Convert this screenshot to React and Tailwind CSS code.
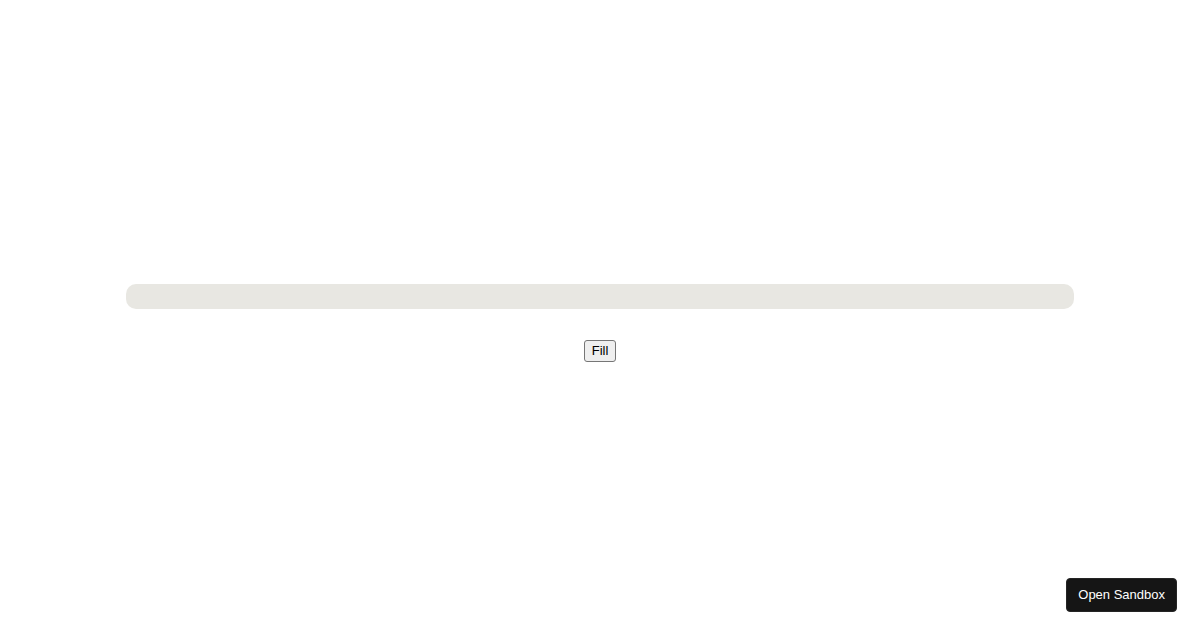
import { useState } from "react";

const ProgressBar = ({ percent }) => {
  return (
    <div
      role="progressbar"
      aria-label="Progress"
      aria-valuemin={0}
      aria-valuemax={100}
      aria-valuenow={percent}
      className="w-4/5 h-[25px] rounded-[10px] bg-[#e8e7e2] overflow-hidden"
    >
      <div
        className="h-full rounded-[10px] bg-green-600 transition-all duration-1000"
        style={{ width: `${percent}%` }}
      />
    </div>
  );
};

const App = () => {
  const [percent, setPercent] = useState(0);

  return (
    <div className="min-h-screen bg-white px-2 pt-4 flex flex-col items-center justify-center gap-[31px] font-['Liberation_Sans',Arial,sans-serif] text-[13px]">
      <ProgressBar percent={percent} />

      <button
        type="button"
        onClick={() => setPercent(100)}
        className="h-[22px] px-[7px] border border-[#767676] rounded-[3px] bg-[#efefef] text-black leading-[18px]"
      >
        Fill
      </button>

      {/* link that stays in the corner of the preview */}
      <a
        href="#sandbox"
        className="fixed right-[23px] bottom-[18px] h-[34px] px-[11px] flex items-center rounded-[4px] border border-[#252525] bg-[#151515] text-white"
      >
        Open Sandbox
      </a>
    </div>
  );
};

export default App;
